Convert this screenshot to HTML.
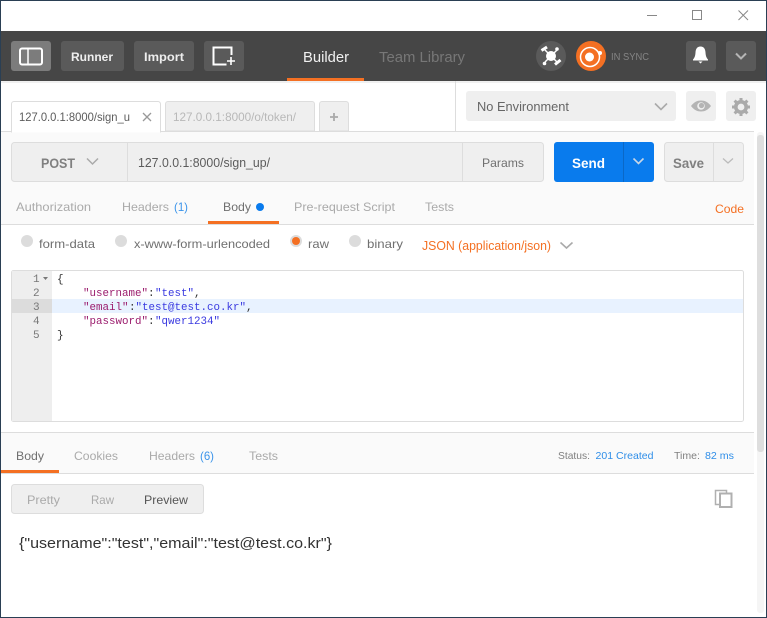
<!DOCTYPE html>
<html><head><meta charset="utf-8"><style>
html,body{margin:0;padding:0;background:#fff;width:767px;height:618px;overflow:hidden}
svg{display:block}
text{font-family:"Liberation Sans",sans-serif;font-size:12px;white-space:pre}
.m{font-family:"Liberation Mono",monospace;font-size:11px}
</style></head><body>
<svg width="767" height="618" viewBox="0 0 767 618" xmlns="http://www.w3.org/2000/svg">
<rect width="767" height="618" fill="#fff"/>
<!-- window controls -->
<path d="M647 15.500h10" stroke="#888" fill="none"/>
<rect x="692.500" y="10.500" width="9" height="9" fill="none" stroke="#888"/>
<path d="M738.500 10.500l9.500 9.500M748 10.500l-9.500 9.500" stroke="#888" fill="none"/>
<!-- top bar -->
<rect x="1" y="31" width="765" height="50" fill="#464646"/>
<rect x="11" y="41" width="40" height="30" rx="3" fill="#7c7c7c"/>
<rect x="20" y="48.500" width="22" height="16" rx="2" fill="none" stroke="#fff" stroke-width="2"/>
<path d="M28 48v17" stroke="#fff" stroke-width="1.500"/>
<rect x="61" y="41" width="63" height="30" rx="3" fill="#5a5a5a"/>
<rect x="134" y="41" width="60" height="30" rx="3" fill="#5a5a5a"/>
<rect x="204" y="41" width="40" height="30" rx="3" fill="#5a5a5a"/>
<path d="M231.500 55v-7.500h-18v17h13" fill="none" stroke="#fff" stroke-width="2"/>
<path d="M227 61h8M231 57v8" stroke="#fff" stroke-width="1.600"/>
<text x="71" y="61" textLength="42" lengthAdjust="spacingAndGlyphs" font-weight="bold" fill="#eee">Runner</text>
<text x="144" y="61" textLength="40" lengthAdjust="spacingAndGlyphs" font-weight="bold" fill="#eee">Import</text>
<text x="303" y="62" textLength="46" lengthAdjust="spacingAndGlyphs" style="font-size:15px" fill="#f0f0f0">Builder</text>
<rect x="287" y="78" width="77" height="3" fill="#f47023"/>
<text x="379" y="62" textLength="86" lengthAdjust="spacingAndGlyphs" style="font-size:15px" fill="#777">Team Library</text>
<circle cx="551" cy="56" r="15" fill="#5a5a5a"/>
<circle cx="551" cy="56" r="5" fill="#fff"/>
<path d="M545 50l12 12M557 50l-12 12" stroke="#fff" stroke-width="1.500"/>
<path d="M541.500 50.500l5.500-3.500M555 64.500l5.500-4.500" stroke="#fff" stroke-width="3"/>
<circle cx="544.500" cy="63.500" r="1.800" fill="#fff"/><circle cx="557" cy="49" r="1.800" fill="#fff"/>
<circle cx="591" cy="56" r="15" fill="#f47023"/>
<circle cx="590" cy="57" r="9.500" fill="none" stroke="#fff" stroke-width="1.500"/>
<circle cx="589.500" cy="57" r="4.500" fill="#fff"/>
<circle cx="600" cy="53" r="2" fill="#fff"/>
<text x="611" y="60" textLength="38" lengthAdjust="spacingAndGlyphs" style="font-size:10px" fill="#858585">IN SYNC</text>
<rect x="686" y="41" width="30" height="30" rx="3" fill="#5a5a5a"/>
<path d="M700.500 46.500c-3.500 0-4.800 2.500-5 6-.2 3.500-1 5.500-2.500 7v1h15v-1c-1.500-1.500-2.300-3.500-2.500-7-.2-3.500-1.500-6-5-6z" fill="#fff"/>
<path d="M698.500 61.500h4l-2 2z" fill="#fff"/>
<rect x="726" y="41" width="30" height="30" rx="3" fill="#5a5a5a"/>
<path d="M736 53.500l5 5 5-5" fill="none" stroke="#b5b5b5" stroke-width="2"/>
<!-- tab row -->
<rect x="1" y="81" width="755" height="50" fill="#fff"/>
<rect x="1" y="81" width="765" height="2" fill="#e6e6e6" opacity=".6"/>
<rect x="455" y="81" width="1" height="50" fill="#ddd"/>
<rect x="1" y="131" width="753" height="1" fill="#ddd"/>
<path d="M165.500 131v-27a2.500 2.500 0 0 1 2.500-2.500h144a2.500 2.500 0 0 1 2.500 2.500v27z" fill="#efefef" stroke="#ddd"/>
<path d="M319.500 131v-27a2.500 2.500 0 0 1 2.500-2.500h24a2.500 2.500 0 0 1 2.500 2.500v27z" fill="#efefef" stroke="#ddd"/>
<!-- request area -->
<rect x="1" y="132" width="753" height="92" fill="#fafafa"/>
<path d="M11.500 132v-28a2.500 2.500 0 0 1 2.500-2.500h144a2.500 2.500 0 0 1 2.500 2.500v28z" fill="#fff" stroke="#ddd"/>
<rect x="12" y="131" width="148" height="1.500" fill="#fff"/>
<text x="19" y="121" textLength="111" lengthAdjust="spacingAndGlyphs" fill="#5c5c5c">127.0.0.1:8000/sign_u</text>
<path d="M143 113l8 8M151 113l-8 8" stroke="#999" stroke-width="1.300"/>
<text x="173" y="121" textLength="123" lengthAdjust="spacingAndGlyphs" fill="#b8b8b8">127.0.0.1:8000/o/token/</text>
<path d="M330 117h8M334 113v8" stroke="#aaa" stroke-width="1.800"/>
<rect x="466" y="91" width="210" height="30" rx="3" fill="#efefef"/>
<text x="477" y="111" textLength="92" lengthAdjust="spacingAndGlyphs" style="font-size:13px" fill="#666">No Environment</text>
<path d="M655 103.500l6 6 6-6" fill="none" stroke="#aaa" stroke-width="1.600"/>
<rect x="686" y="91" width="30" height="30" rx="3" fill="#efefef"/>
<path d="M691 106c3-4 6.300-5.500 10-5.500s7 1.500 10 5.500c-3 4-6.300 5.500-10 5.500s-7-1.500-10-5.500z" fill="#b4b4b4"/>
<circle cx="701" cy="106" r="3.800" fill="#efefef"/><circle cx="701.500" cy="105.500" r="2.600" fill="#b4b4b4"/>
<rect x="726" y="91" width="30" height="30" rx="3" fill="#efefef"/>
<circle cx="741" cy="107" r="5.200" fill="none" stroke="#aaa" stroke-width="3.600"/>
<path d="M741 98v2.500M741 113.500v2.500M732 107h2.500M747.500 107h2.500M734.600 100.600l1.800 1.800M745.600 111.600l1.800 1.800M747.400 100.600l-1.800 1.800M736.400 111.600l-1.800 1.800" stroke="#aaa" stroke-width="3"/>
<rect x="11.500" y="142.500" width="532" height="39" rx="3" fill="#efefef" stroke="#ddd"/>
<path d="M127.500 143v38M462.500 143v38" stroke="#ddd"/>
<text x="41" y="168" textLength="34" lengthAdjust="spacingAndGlyphs" font-weight="bold" style="font-size:14px" fill="#808080">POST</text>
<path d="M87 158.500l5.500 5.500 5.500-5.500" fill="none" stroke="#aaa" stroke-width="1.500"/>
<text x="138" y="167" textLength="132" lengthAdjust="spacingAndGlyphs" style="font-size:13px" fill="#5c5c5c">127.0.0.1:8000/sign_up/</text>
<text x="482" y="167" textLength="42" lengthAdjust="spacingAndGlyphs" fill="#707070">Params</text>
<rect x="554" y="142" width="100" height="40" rx="3" fill="#097bed"/>
<rect x="623" y="142" width="1" height="40" fill="#0a68c7"/>
<text x="572" y="168" textLength="33" lengthAdjust="spacingAndGlyphs" font-weight="bold" style="font-size:14px" fill="#fff">Send</text>
<path d="M633.500 158.500l5 5 5-5" fill="none" stroke="#c9d7e6" stroke-width="1.600"/>
<rect x="664.500" y="142.500" width="79" height="39" rx="3" fill="#efefef" stroke="#ddd"/>
<path d="M713.500 143v38" stroke="#ddd"/>
<text x="673" y="168" textLength="31" lengthAdjust="spacingAndGlyphs" font-weight="bold" style="font-size:14px" fill="#808080">Save</text>
<path d="M723 158.500l5 4.500 5-4.500" fill="none" stroke="#bbb" stroke-width="1.300"/>
<text x="16" y="211" textLength="75" lengthAdjust="spacingAndGlyphs" fill="#aaa">Authorization</text>
<text x="122" y="211" textLength="47" lengthAdjust="spacingAndGlyphs" fill="#aaa">Headers</text>
<text x="174" y="211" textLength="14" lengthAdjust="spacingAndGlyphs" fill="#3b94ea">(1)</text>
<text x="223" y="211" textLength="28" lengthAdjust="spacingAndGlyphs" fill="#707070">Body</text>
<circle cx="260" cy="207" r="4" fill="#097bed"/>
<text x="294" y="211" textLength="101" lengthAdjust="spacingAndGlyphs" fill="#aaa">Pre-request Script</text>
<text x="425" y="211" textLength="29" lengthAdjust="spacingAndGlyphs" fill="#aaa">Tests</text>
<text x="715" y="213" textLength="29" lengthAdjust="spacingAndGlyphs" fill="#f47023">Code</text>
<rect x="1" y="224" width="753" height="1" fill="#ddd"/>
<rect x="208" y="221" width="71" height="3" fill="#f47023"/>
<!-- radios -->
<circle cx="27" cy="241" r="6" fill="#dcdcdc"/>
<circle cx="121" cy="241" r="6" fill="#dcdcdc"/>
<circle cx="296" cy="241" r="6" fill="#dcdcdc"/><circle cx="296" cy="241" r="4" fill="#f47023"/>
<circle cx="355" cy="241" r="6" fill="#dcdcdc"/>
<text x="39" y="248" textLength="56" lengthAdjust="spacingAndGlyphs" fill="#707070">form-data</text>
<text x="134" y="248" textLength="136" lengthAdjust="spacingAndGlyphs" fill="#707070">x-www-form-urlencoded</text>
<text x="308" y="248" textLength="21" lengthAdjust="spacingAndGlyphs" fill="#707070">raw</text>
<text x="367" y="248" textLength="36" lengthAdjust="spacingAndGlyphs" fill="#707070">binary</text>
<text x="422" y="250" textLength="129" lengthAdjust="spacingAndGlyphs" style="font-size:13px" fill="#f47023">JSON (application/json)</text>
<path d="M560.500 242.500l6 5.500 6-5.500" fill="none" stroke="#aaa" stroke-width="1.600"/>
<!-- editor -->
<rect x="11.500" y="270.500" width="732" height="151" rx="2" fill="#fff" stroke="#ddd"/>
<rect x="12" y="271" width="40" height="150" fill="#eee"/>
<rect x="12" y="299" width="40" height="14" fill="#dcdcdc"/>
<rect x="52" y="299" width="691" height="14" fill="#e8f2ff"/>
<text class="m" x="33" y="282" fill="#777">1</text><text class="m" x="33" y="296" fill="#777">2</text><text class="m" x="33" y="310" fill="#777">3</text><text class="m" x="33" y="324" fill="#777">4</text><text class="m" x="33" y="338" fill="#777">5</text>
<path d="M43 277h5l-2.500 3z" fill="#777"/>
<text class="m" x="57" y="282" fill="#333">{</text>
<text class="m" x="83" y="296" textLength="65" lengthAdjust="spacingAndGlyphs" fill="#9b1c6d">"username"</text>
<text class="m" x="148" y="296" fill="#333">:</text>
<text class="m" x="155" y="296" textLength="39" lengthAdjust="spacingAndGlyphs" fill="#3a3ae0">"test"</text>
<text class="m" x="194" y="296" fill="#333">,</text>
<text class="m" x="83" y="310" textLength="45.500" lengthAdjust="spacingAndGlyphs" fill="#9b1c6d">"email"</text>
<text class="m" x="129" y="310" fill="#333">:</text>
<text class="m" x="135.500" y="310" textLength="110.500" lengthAdjust="spacingAndGlyphs" fill="#3a3ae0">"test@test.co.kr"</text>
<text class="m" x="246" y="310" fill="#333">,</text>
<text class="m" x="83" y="324" textLength="65" lengthAdjust="spacingAndGlyphs" fill="#9b1c6d">"password"</text>
<text class="m" x="148" y="324" fill="#333">:</text>
<text class="m" x="155" y="324" textLength="65" lengthAdjust="spacingAndGlyphs" fill="#3a3ae0">"qwer1234"</text>
<text class="m" x="57" y="338" fill="#333">}</text>
<!-- response -->
<rect x="1" y="432" width="753" height="1" fill="#ddd"/>
<rect x="1" y="433" width="753" height="40" fill="#fafafa"/>
<rect x="1" y="473" width="753" height="1" fill="#ddd"/>
<rect x="1" y="470" width="58" height="3" fill="#f47023"/>
<text x="16" y="460" textLength="28" lengthAdjust="spacingAndGlyphs" fill="#707070">Body</text>
<text x="74" y="460" textLength="44" lengthAdjust="spacingAndGlyphs" fill="#aaa">Cookies</text>
<text x="149" y="460" textLength="46" lengthAdjust="spacingAndGlyphs" fill="#aaa">Headers</text>
<text x="200" y="460" textLength="14" lengthAdjust="spacingAndGlyphs" fill="#3b94ea">(6)</text>
<text x="249" y="460" textLength="29" lengthAdjust="spacingAndGlyphs" fill="#aaa">Tests</text>
<text x="558" y="459" textLength="32" lengthAdjust="spacingAndGlyphs" style="font-size:10.500px" fill="#808080">Status:</text>
<text x="595.500" y="459" textLength="58" lengthAdjust="spacingAndGlyphs" style="font-size:10.500px" fill="#2f8ee8">201 Created</text>
<text x="674" y="459" textLength="26" lengthAdjust="spacingAndGlyphs" style="font-size:10.500px" fill="#808080">Time:</text>
<text x="705" y="459" textLength="29" lengthAdjust="spacingAndGlyphs" style="font-size:10.500px" fill="#2f8ee8">82 ms</text>
<rect x="11.500" y="484.500" width="192" height="29" rx="3" fill="#efefef" stroke="#ddd"/>
<text x="27" y="504" textLength="33" lengthAdjust="spacingAndGlyphs" fill="#aaa">Pretty</text>
<text x="91" y="504" textLength="23" lengthAdjust="spacingAndGlyphs" fill="#aaa">Raw</text>
<text x="144" y="504" textLength="44" lengthAdjust="spacingAndGlyphs" fill="#555">Preview</text>
<path d="M719 504.500h-3.500v-14h11v3" fill="none" stroke="#b0b0b0" stroke-width="1.500"/>
<rect x="720" y="493.500" width="11.500" height="13.500" fill="#fff" stroke="#b0b0b0" stroke-width="2"/>
<text x="19" y="548" textLength="313" lengthAdjust="spacingAndGlyphs" style="font-size:15px" fill="#333">{"username":"test","email":"test@test.co.kr"}</text>
<!-- scrollbar -->
<rect x="757" y="132" width="7" height="481" rx="3" fill="#f5f5f5"/>
<rect x="757" y="135" width="7" height="317" rx="3" fill="#dedede"/>
<!-- window border -->
<rect x=".5" y=".5" width="766" height="617" fill="none" stroke="#2a3f54"/>
</svg>
</body></html>
